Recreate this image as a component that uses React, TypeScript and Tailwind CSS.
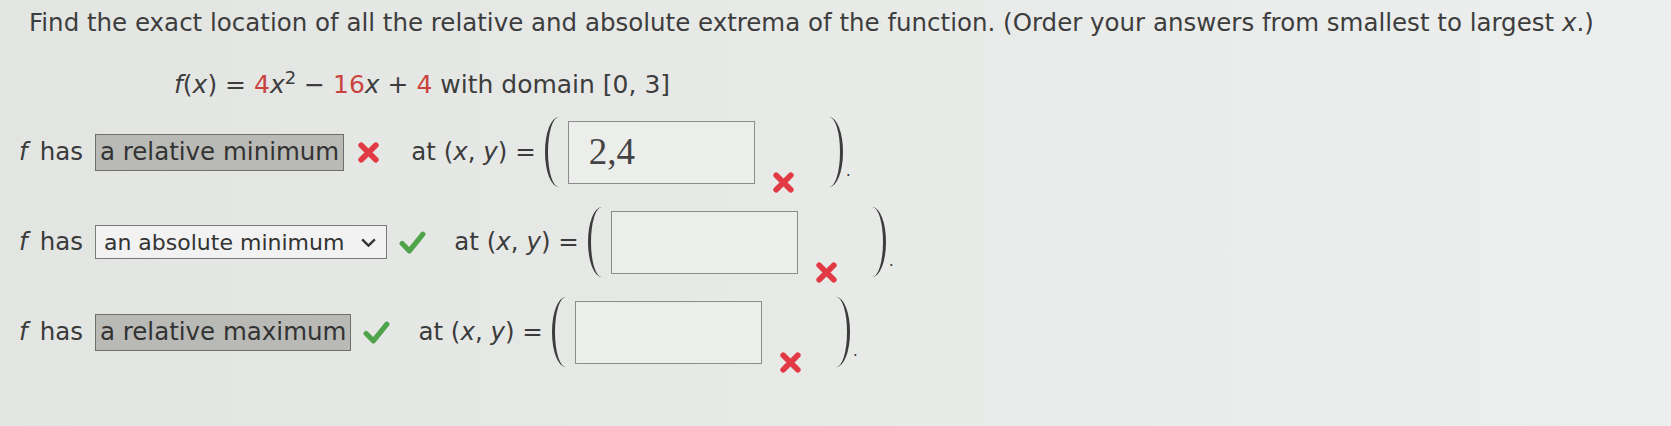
function RedX() {
  return (
    <svg viewBox="0 0 24 24" className="h-[25px] w-[25px]">
      <path d="M5 5 L19 19 M19 5 L5 19" stroke="#e23a44" strokeWidth="5.5" strokeLinecap="round" />
    </svg>
  );
}

function GreenCheck() {
  return (
    <svg viewBox="0 0 26 24" className="h-[25px] w-[27px]">
      <path d="M3 13 L10 20 L23 4" fill="none" stroke="#4fa34a" strokeWidth="5" strokeLinecap="round" strokeLinejoin="round" />
    </svg>
  );
}

// tall thin bracket, drawn as a bordered arc
function Paren({ side }: { side: 'l' | 'r' }) {
  return side === 'l' ? (
    <span className="block h-[70px] w-[15px] rounded-tl-[100%_55%] rounded-bl-[100%_55%] border-l-[3px] border-[#3c3c3c]" />
  ) : (
    <span className="block h-[70px] w-[15px] rounded-tr-[100%_55%] rounded-br-[100%_55%] border-r-[3px] border-[#3c3c3c]" />
  );
}

function AnswerRow({
  choice,
  kind,
  mark,
  value,
}: {
  choice: string;
  kind: 'gray' | 'select';
  mark: 'x' | 'check';
  value?: string;
}) {
  return (
    <div className="flex h-[90px] items-center pl-[19px] text-[24.5px] text-[#3b3b3b]">
      <span className="italic">f</span>
      <span className="ml-[12px]">has</span>
      {kind === 'gray' ? (
        <span className="ml-[12px] flex h-[37px] items-center border border-[#6e6e6e] bg-[#b9bab6] px-[4px] text-[24.5px] text-[#333]">
          {choice}
        </span>
      ) : (
        <span className="ml-[12px] flex h-[34px] items-center gap-[16px] border border-[#7a7a7a] bg-[#f1f2f1] pl-[8px] pr-[9px] text-[22px] text-[#333]">
          {choice}
          <svg viewBox="0 0 16 10" className="h-[11px] w-[17px]">
            <path d="M2 2 L8 8 L14 2" fill="none" stroke="#333" strokeWidth="2.2" />
          </svg>
        </span>
      )}
      <span className="ml-[12px] flex w-[27px] items-center">
        {mark === 'x' ? <RedX /> : <GreenCheck />}
      </span>
      <span className="ml-[28px]">
        at (<span className="italic">x</span>, <span className="italic">y</span>) =
      </span>
      <span className="ml-[9px] flex items-center">
        <Paren side="l" />
        <span className="ml-[8px] flex h-[63px] w-[187px] items-center border border-[#8c8c8c] bg-[#eceeec] pl-[20px] font-['Liberation_Serif',serif] text-[37px] text-[#444]">
          {value}
        </span>
        <span className="ml-[16px] mt-[60px]">
          <RedX />
        </span>
        <span className="ml-[32px]">
          <Paren side="r" />
        </span>
        <span className="ml-[3px] mt-[38px] text-[16px]">.</span>
      </span>
    </div>
  );
}

export default function App() {
  return (
    <div className="h-[426px] w-full overflow-hidden bg-gradient-to-r from-[#e3e5e2] via-[#e8eae8] to-[#edefee] font-['DejaVu_Sans',Verdana,sans-serif] text-[#3d3d3d]">
      <div className="pl-[29px] pt-[8px] text-[24.5px] leading-[30px]">
        Find the exact location of all the relative and absolute extrema of the function. (Order your answers from
        smallest to largest <span className="italic">x</span>.)
      </div>
      <div className="mt-[32px] pl-[174px] text-[25px] leading-[30px]">
        <span className="italic">f</span>(<span className="italic">x</span>) ={' '}
        <span className="text-[#c9443f]">4</span>
        <span className="italic">x</span>
        <sup className="text-[18px]">2</sup> − <span className="text-[#c9443f]">16</span>
        <span className="italic">x</span> + <span className="text-[#c9443f]">4</span> with domain [0, 3]
      </div>
      <div className="mt-[7px] flex flex-col">
        <AnswerRow choice="a relative minimum" kind="gray" mark="x" value="2,4" />
        <AnswerRow choice="an absolute minimum" kind="select" mark="check" />
        <AnswerRow choice="a relative maximum" kind="gray" mark="check" />
      </div>
    </div>
  );
}
